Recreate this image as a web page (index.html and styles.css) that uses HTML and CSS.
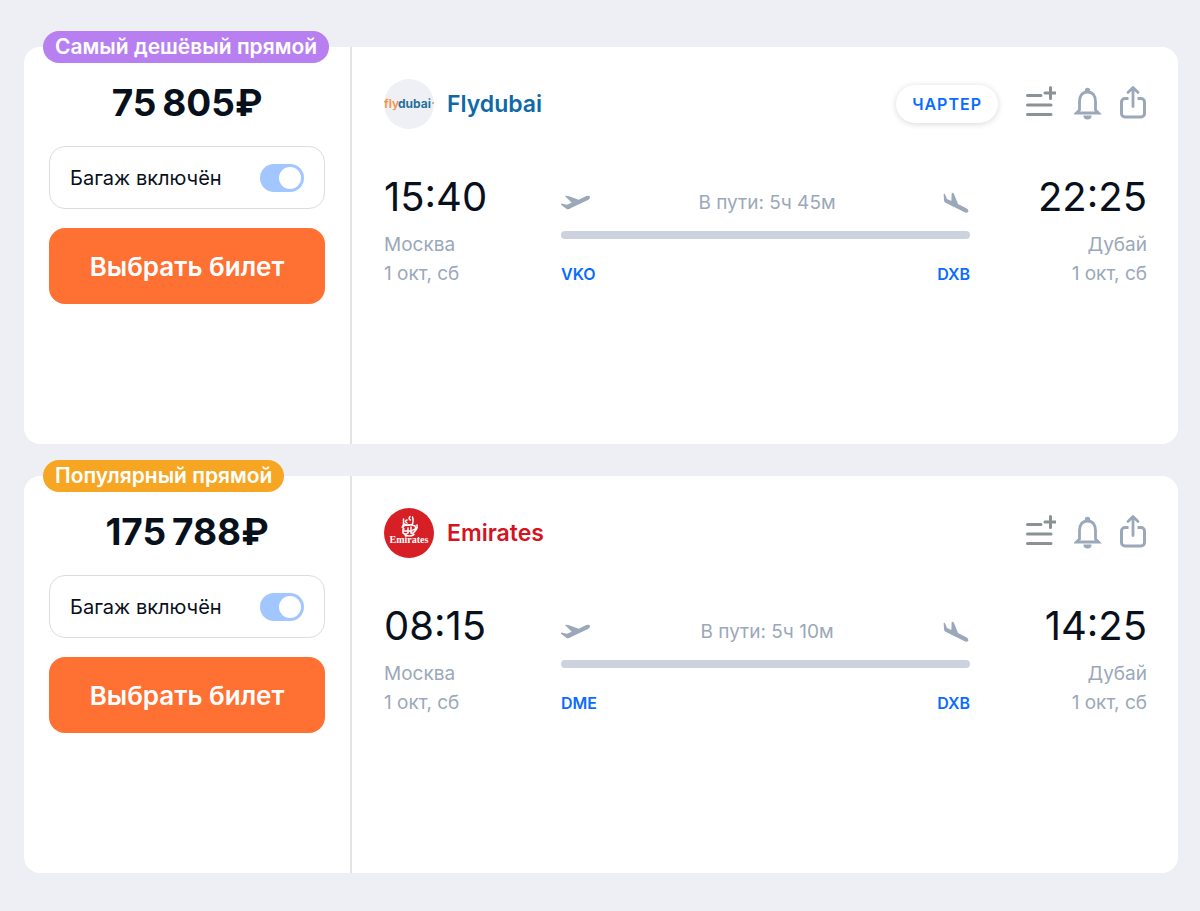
FILE: index.html
```html
<!DOCTYPE html>
<html lang="ru">
<head>
    <meta charset="UTF-8">
    <meta name="viewport" content="width=device-width, initial-scale=1.0">
    <title>Москва — Дубай</title>
    <link rel="stylesheet" href="styles.css">
</head>
<body>
    <!-- shared icons -->
    <svg class="sprite" aria-hidden="true">
        <symbol id="icon-list" viewBox="0 0 30 32">
            <path d="M1.5 10.5H15M1.5 20H25M1.5 29.5H25M24.5 2.5V13.5M19 8H30" fill="none" stroke="#8a9296" stroke-width="3" stroke-linecap="round"/>
        </symbol>
        <symbol id="icon-bell" viewBox="0 -2 28 35">
            <path d="M5.5 23V14.5C5.5 8.5 8.5 5 13.500 5S21.5 8.5 21.5 14.5V23L24.500 26H2.500Z" fill="none" stroke="#9ba8b9" stroke-width="2.8"/>
            <path d="M10.8 5V3.5a2.700 2.700 0 0 1 5.4 0V5ZM9.400 28.500h8.200a4.100 4 0 0 1-8.200 0Z" fill="#9ba8b9"/>
        </symbol>
        <symbol id="icon-share" viewBox="0 0 27 34">
            <path d="M8.5 13.5H5A3.500 3.500 0 0 0 1.500 17V28.500A3.500 3.500 0 0 0 5 32H21A3.500 3.500 0 0 0 24.500 28.500V17A3.500 3.500 0 0 0 21 13.500H17.5" fill="none" stroke="#9ba8b9" stroke-width="3"/>
            <path d="M13 3V21.500M8 7.500L13 2.500L18 7.500" fill="none" stroke="#9ba8b9" stroke-width="2.800" stroke-linecap="round" stroke-linejoin="round"/>
        </symbol>
        <symbol id="icon-takeoff" viewBox="30 48 90 45">
            <path d="M42 51Q47 49 54 52L83 62L106 51Q115 48 117 53Q118 59 111 63L60 87Q52 93 46 89L30 77Q30 73 34 74L48 77L62 71Z" fill="#9ba8b9"/>
        </symbol>
        <symbol id="icon-landing" viewBox="39 33 81 63">
            <path d="M41 39Q44 37 46 42L51 54L64 60L65 36Q69 33 72 39L84 69L109 82Q116 86 115 92Q111 97 104 94L48 66Q42 64 42 58Z" fill="#9ba8b9"/>
        </symbol>
    </svg>

    <main class="tickets">
        <article class="ticket">
            <span class="badge badge-cheap">Самый дешёвый прямой</span>
            <div class="ticket-side">
                <div class="price">75&#8201;805₽</div>
                <label class="baggage">
                    Багаж включён
                    <input class="switch" type="checkbox" checked>
                </label>
                <button class="buy" type="button">Выбрать билет</button>
            </div>
            <div class="ticket-main">
                <header class="carrier">
                    <svg class="logo" viewBox="0 0 50 50" aria-hidden="true">
                        <circle cx="25" cy="25" r="25" fill="#eff0f5"/>
                        <text class="logo-fly" x="0" y="29">fly</text>
                        <text class="logo-dubai" x="14" y="29">dubai</text>
                        <circle cx="49" cy="24" r="1" fill="#f39244"/>
                    </svg>
                    <h2 class="carrier-name flydubai">Flydubai</h2>
                    <button class="charter" type="button">ЧАРТЕР</button>
                    <div class="actions">
                        <button class="action" type="button" aria-label="Добавить в список"><svg width="30" height="32"><use href="#icon-list"/></svg></button>
                        <button class="action" type="button" aria-label="Следить за ценой"><svg width="28" height="35"><use href="#icon-bell"/></svg></button>
                        <button class="action" type="button" aria-label="Поделиться"><svg width="27" height="34"><use href="#icon-share"/></svg></button>
                    </div>
                </header>
                <div class="segment">
                    <div class="point">
                        <div class="time">15:40</div>
                        <div>Москва</div>
                        <div>1 окт, сб</div>
                    </div>
                    <div class="route">
                        <div class="route-top">
                            <svg width="30" height="15" aria-hidden="true"><use href="#icon-takeoff"/></svg>
                            <span>В пути: 5ч 45м</span>
                            <svg width="27" height="21" aria-hidden="true"><use href="#icon-landing"/></svg>
                        </div>
                        <div class="route-line"></div>
                        <div class="codes"><span>VKO</span><span>DXB</span></div>
                    </div>
                    <div class="point point-end">
                        <div class="time">22:25</div>
                        <div>Дубай</div>
                        <div>1 окт, сб</div>
                    </div>
                </div>
            </div>
        </article>

        <article class="ticket">
            <span class="badge badge-popular">Популярный прямой</span>
            <div class="ticket-side">
                <div class="price">175&#8201;788₽</div>
                <label class="baggage">
                    Багаж включён
                    <input class="switch" type="checkbox" checked>
                </label>
                <button class="buy" type="button">Выбрать билет</button>
            </div>
            <div class="ticket-main">
                <header class="carrier">
                    <svg class="logo" viewBox="0 0 50 50" aria-hidden="true">
                        <circle cx="25" cy="25" r="25" fill="#d71f26"/>
                        <path d="M26 8.500Q24 11 26.500 12M28.500 9Q30 14 28 16.500Q24 18 20 16M19.500 11V16Q18 19 20 21M23 12Q20 13 23 15M18 19Q24 15 31 18Q33 21 29 22M33 17Q34 21 30 24M19 21V25Q21 27 24 25V20M27 19V25Q29 26 31 23M21 27Q26 29 30 26.500M20 23H28" fill="none" stroke="#fff" stroke-width="1.500" stroke-linecap="round"/>
                        <text class="logo-emirates" x="25" y="35" text-anchor="middle">Emirates</text>
                    </svg>
                    <h2 class="carrier-name emirates">Emirates</h2>
                    <div class="actions">
                        <button class="action" type="button" aria-label="Добавить в список"><svg width="30" height="32"><use href="#icon-list"/></svg></button>
                        <button class="action" type="button" aria-label="Следить за ценой"><svg width="28" height="35"><use href="#icon-bell"/></svg></button>
                        <button class="action" type="button" aria-label="Поделиться"><svg width="27" height="34"><use href="#icon-share"/></svg></button>
                    </div>
                </header>
                <div class="segment">
                    <div class="point">
                        <div class="time">08:15</div>
                        <div>Москва</div>
                        <div>1 окт, сб</div>
                    </div>
                    <div class="route">
                        <div class="route-top">
                            <svg width="30" height="15" aria-hidden="true"><use href="#icon-takeoff"/></svg>
                            <span>В пути: 5ч 10м</span>
                            <svg width="27" height="21" aria-hidden="true"><use href="#icon-landing"/></svg>
                        </div>
                        <div class="route-line"></div>
                        <div class="codes"><span>DME</span><span>DXB</span></div>
                    </div>
                    <div class="point point-end">
                        <div class="time">14:25</div>
                        <div>Дубай</div>
                        <div>1 окт, сб</div>
                    </div>
                </div>
            </div>
        </article>
    </main>
</body>
</html>
```

FILE: styles.css
```css
* {
    box-sizing: border-box;
}
body {
    margin: 0;
    background-color: #eeeff4;
    color: #08101c;
    font-family: Inter, "Liberation Sans", sans-serif;
    font-size: 20px;
}
button {
    border: none;
    padding: 0;
    font-family: inherit;
    cursor: pointer;
}
.sprite {
    display: none;
}
.tickets {
    display: flex;
    flex-direction: column;
    gap: 32px;
    padding: 47px 22px 37px 24px;
}
.ticket {
    position: relative;
    display: grid;
    grid-template-columns: 328px 1fr;
    min-height: 397px;
    background-color: #fff;
    border-radius: 16px;
}
.badge {
    position: absolute;
    top: -16px;
    left: 19px;
    padding: 0 12px;
    border-radius: 16px;
    color: #fff;
    font-size: 21px;
    font-weight: 600;
    line-height: 32px;
}
.badge-cheap {
    background-color: #b87ff0;
}
.badge-popular {
    background-color: #f6a623;
}
.ticket-side {
    display: flex;
    flex-direction: column;
    padding: 32px 25px;
    border-right: 2px solid #e3e4e8;
}
.price {
    font-size: 37px;
    font-weight: 700;
    line-height: 48px;
    text-align: center;
}
.baggage {
    display: flex;
    align-items: center;
    justify-content: space-between;
    height: 63px;
    margin-top: 19px;
    padding: 0 20px;
    border: 1px solid #dcdde2;
    border-radius: 16px;
}
.switch {
    appearance: none;
    display: flex;
    justify-content: flex-end;
    width: 44px;
    height: 28px;
    margin: 0;
    padding: 3px;
    border-radius: 14px;
    background-color: #a2c6ff;
    cursor: pointer;
}
.switch::before {
    content: "";
    width: 22px;
    height: 22px;
    border-radius: 50%;
    background-color: #fff;
}
.switch:not(:checked) {
    justify-content: flex-start;
    background-color: #cdd3de;
}
.buy {
    height: 76px;
    margin-top: 19px;
    border-radius: 16px;
    background-color: #ff7033;
    color: #fff;
    font-size: 26px;
    font-weight: 600;
}
.ticket-main {
    padding: 32px 31px 32px 32px;
}
.carrier {
    display: flex;
    align-items: center;
    height: 50px;
}
.logo {
    width: 50px;
    height: 50px;
}
.logo-fly {
    fill: #f39244;
    font-size: 12px;
    font-weight: 600;
}
.logo-dubai {
    fill: #28719d;
    font-size: 12px;
    font-weight: 700;
}
.logo-emirates {
    fill: #fff;
    font-family: "Liberation Serif", serif;
    font-size: 10px;
    font-weight: 700;
}
.carrier-name {
    margin: 0 auto 0 13px;
    font-size: 23px;
    font-weight: 600;
}
.flydubai {
    color: #0f69a8;
}
.emirates {
    color: #d4151f;
}
.charter {
    height: 38px;
    margin-right: 28px;
    padding: 0 16px;
    border-radius: 19px;
    background-color: #fff;
    box-shadow: 0 1px 6px rgba(0, 0, 0, 0.16);
    color: #0a6cff;
    font-size: 16px;
    font-weight: 600;
    letter-spacing: 1px;
}
.actions {
    display: flex;
    align-items: flex-start;
    gap: 18px;
    padding-bottom: 3px;
}
.action {
    background: none;
}
.action svg {
    display: block;
}
.segment {
    display: grid;
    grid-template-columns: 177px 1fr 177px;
    margin-top: 41px;
    color: #9ba8b9;
    font-size: 19px;
}
.point {
    line-height: 29px;
}
.point-end {
    text-align: right;
}
.time {
    margin-bottom: 6px;
    color: #08101c;
    font-size: 40px;
    line-height: 54px;
}
.route-top {
    display: flex;
    align-items: center;
    justify-content: space-between;
    height: 61px;
    padding-top: 3px;
}
.route-line {
    height: 8px;
    border-radius: 4px;
    background-color: #cdd3de;
}
.codes {
    display: flex;
    justify-content: space-between;
    margin-top: 24px;
    color: #0a6cff;
    font-size: 16px;
    font-weight: 600;
    line-height: 22px;
}
```
